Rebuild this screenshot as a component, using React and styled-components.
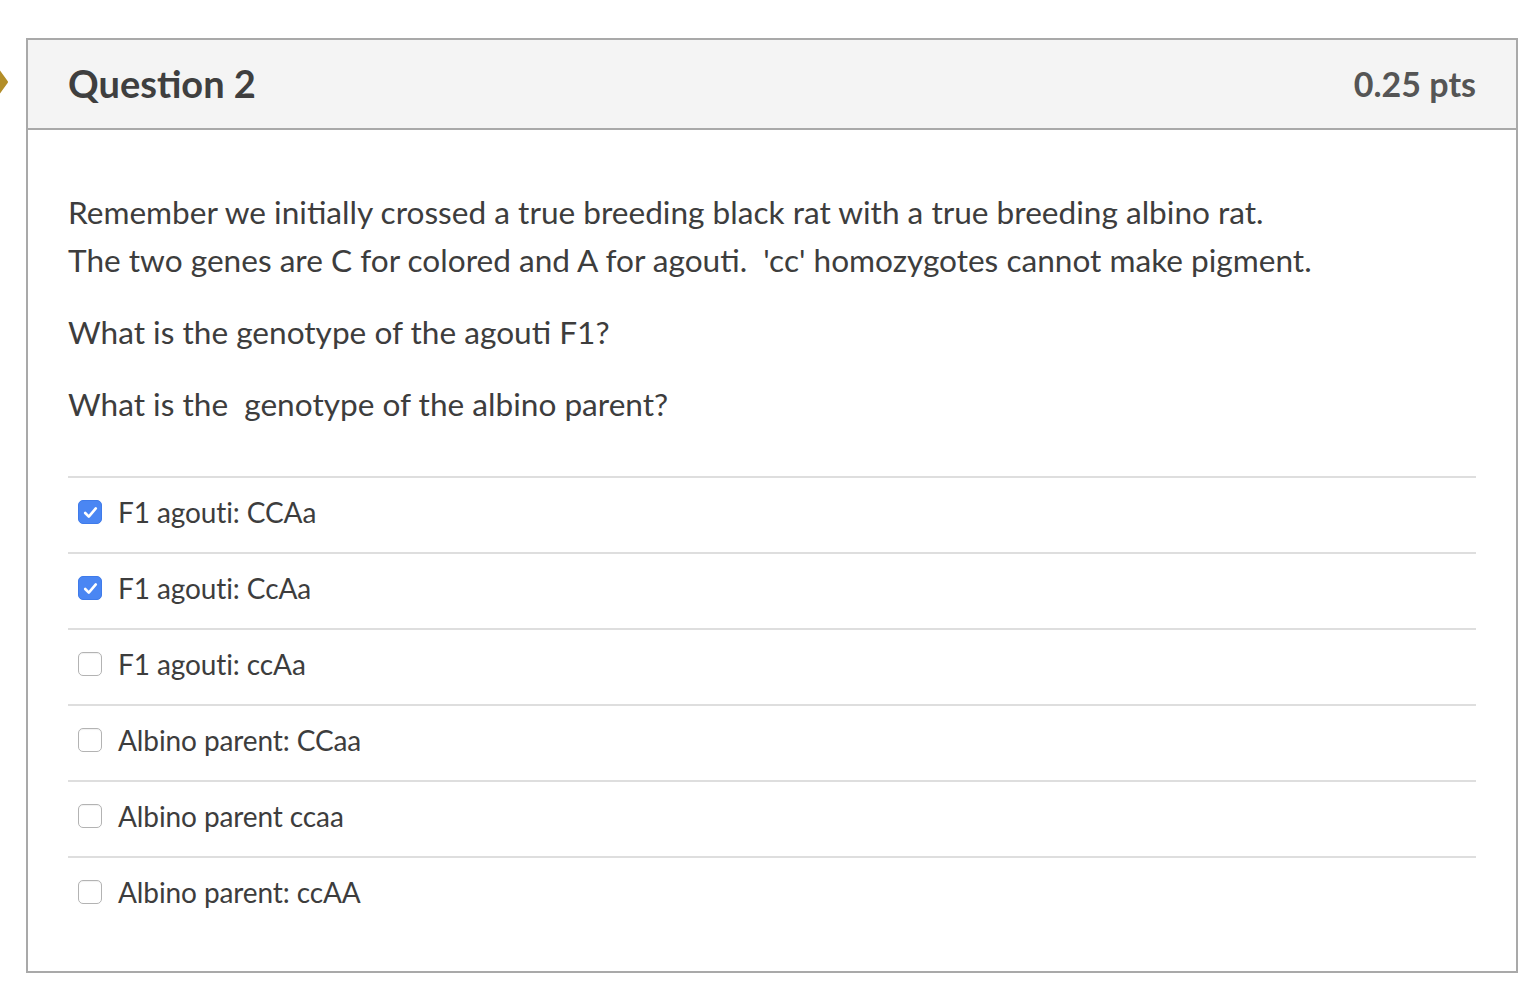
import React from "react";
import styled, { createGlobalStyle } from "styled-components";

const Global = createGlobalStyle`
  html, body { margin: 0; padding: 0; background: #ffffff; }
  body { font-family: Lato, "Open Sans", sans-serif; color: #3d3d3d; }
  * { box-sizing: border-box; }
`;

const Page = styled.div`
  position: relative;
  padding: 38px 0 0 26px;
  width: 1540px;
  min-height: 996px;
`;

const Marker = styled.svg`
  position: absolute;
  left: 0;
  top: 66px;
  width: 12px;
  height: 32px;
`;

const Card = styled.section`
  width: 1492px;
  height: 935px;
  border: 2px solid #a9a9a9;
  display: flex;
  flex-direction: column;
`;

const Header = styled.header`
  height: 90px;
  background: #f4f4f4;
  border-bottom: 2px solid #a9a9a9;
  display: flex;
  align-items: center;
  justify-content: space-between;
  padding: 0 40px 2px 40px;
`;

const Title = styled.h2`
  margin: 0;
  font-family: Lato, sans-serif;
  font-weight: 700;
  font-size: 38px;
  color: #3f3f3f;
`;

const Points = styled.div`
  font-family: Lato, sans-serif;
  font-weight: 700;
  font-size: 34px;
  color: #555555;
`;

const Body = styled.div`
  flex: 1;
  padding: 58px 40px 0 40px;
`;

const Para = styled.p`
  margin: 0 0 24px 0;
  font-size: 31.6px;
  line-height: 48px;
  color: #3d3d3d;
  white-space: pre-wrap;
`;

const Answers = styled.ul`
  list-style: none;
  margin: 48px 0 0 0;
  padding: 0;
`;

const Row = styled.li`
  border-top: 2px solid #dedede;
  padding: 17px 0 23px 10px;
  display: flex;
  align-items: center;
  gap: 16px;
  height: 76px;
`;

const Box = styled.span`
  width: 24px;
  height: 24px;
  border-radius: 5px;
  flex: none;
  display: flex;
  align-items: center;
  justify-content: center;
  background: ${(p) => (p.$checked ? "#4a86f3" : "#ffffff")};
  border: 1px solid ${(p) => (p.$checked ? "#3f7bea" : "#b3b3b3")};
  box-shadow: ${(p) => (p.$checked ? "none" : "inset 0 1px 1px rgba(0,0,0,0.06)")};
`;

const Label = styled.span`
  font-size: 28px;
  line-height: 34px;
  color: #3d3d3d;
  letter-spacing: -0.1px;
`;

const answers = [
  { text: "F1 agouti: CCAa", checked: true },
  { text: "F1 agouti: CcAa", checked: true },
  { text: "F1 agouti: ccAa", checked: false },
  { text: "Albino parent: CCaa", checked: false },
  { text: "Albino parent ccaa", checked: false },
  { text: "Albino parent: ccAA", checked: false },
];

function Check() {
  return (
    <svg width="15" height="13" viewBox="0 0 15 13">
      <path d="M2.2 7 L5.8 10.6 L12.8 2.4" fill="none" stroke="#ffffff" strokeWidth="2.6" strokeLinecap="round" strokeLinejoin="round" />
    </svg>
  );
}

export default function App() {
  return (
    <>
      <Global />
      <Page>
        <Marker viewBox="0 0 12 32">
          <path d="M-2 1.6 L7.6 15 Q8.4 16 7.6 17 L-2 30.4 Z" fill="#b38e29" />
        </Marker>
        <Card>
          <Header>
            <Title>Question 2</Title>
            <Points>0.25 pts</Points>
          </Header>
          <Body>
            <Para>
              Remember we initially crossed a true breeding black rat with a true breeding albino rat.
              <br />
              {"The two genes are C for colored and A for agouti.  'cc' homozygotes cannot make pigment."}
            </Para>
            <Para>What is the genotype of the agouti F1?</Para>
            <Para>{"What is the  genotype of the albino parent?"}</Para>
            <Answers>
              {answers.map((a) => (
                <Row key={a.text}>
                  <Box $checked={a.checked}>{a.checked && <Check />}</Box>
                  <Label>{a.text}</Label>
                </Row>
              ))}
            </Answers>
          </Body>
        </Card>
      </Page>
    </>
  );
}
